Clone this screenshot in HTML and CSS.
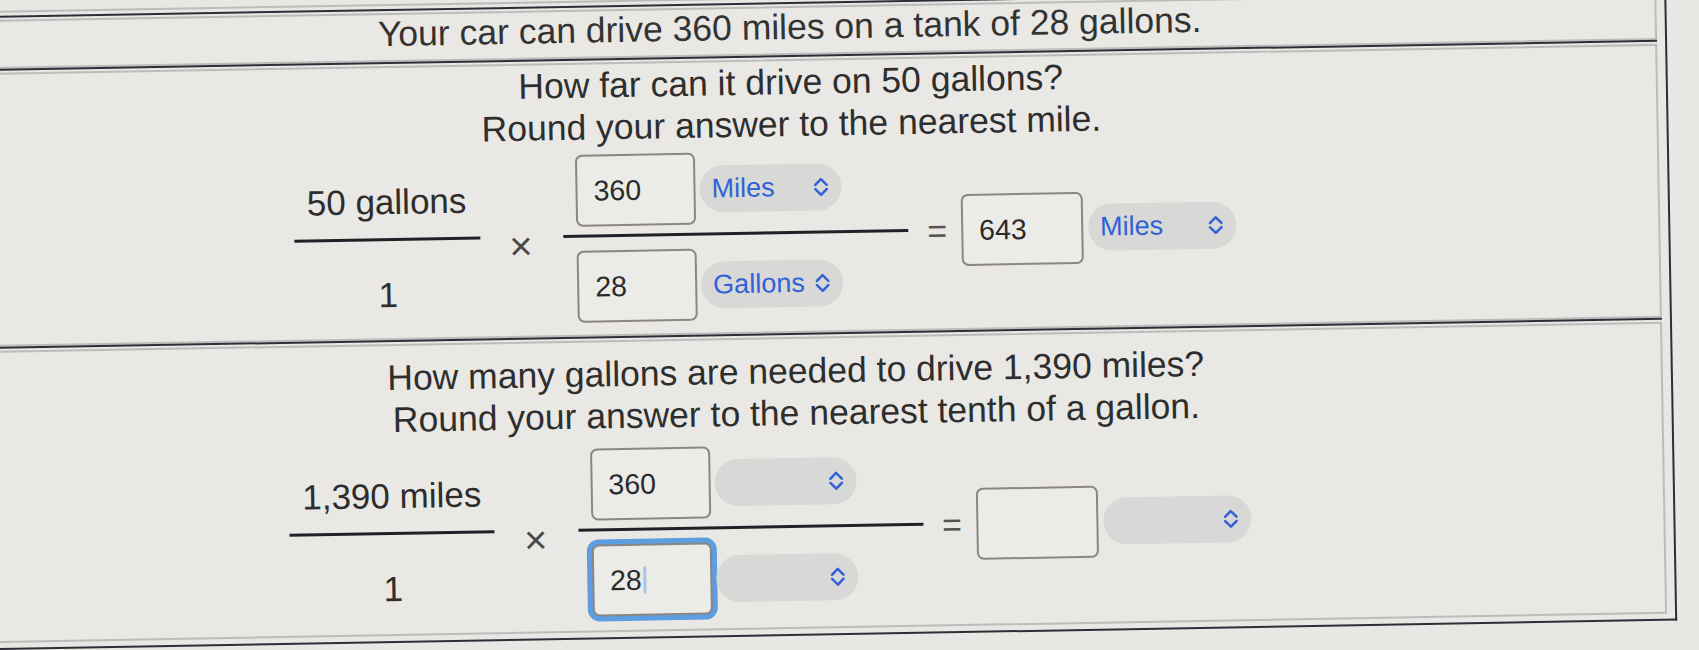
FILE: index.html
```html
<!DOCTYPE html>
<html lang="en">
<head>
<meta charset="utf-8">
<title>Unit rates</title>
<link rel="stylesheet" href="styles.css">
</head>
<body>
<div class="frame">
  <div class="stub"></div>
  <div class="rule"></div>
  <section class="section header">
    <p class="lead">Your car can drive 360 miles on a tank of 28 gallons.</p>
  </section>
  <div class="rule"></div>
  <section class="section panel panel-a">
    <p class="q">How far can it drive on 50 gallons?<br>Round your answer to the nearest mile.</p>
    <div class="eq">
      <div class="frac">
        <div class="num"><span>50 gallons</span></div>
        <div class="bar"></div>
        <div class="den"><span>1</span></div>
      </div>
      <span class="times">×</span>
      <div class="bigfrac">
        <div class="bnum">
          <div class="pair">
            <div class="box">360</div>
            <div class="sel"><span>Miles</span><svg class="chev" viewBox="0 0 16 22" width="17" height="23"><path d="M2.5 9 L8 3.5 L13.5 9 M2.5 13 L8 18.5 L13.5 13"/></svg></div>
          </div>
        </div>
        <div class="bar"></div>
        <div class="bden">
          <div class="pair">
            <div class="box">28</div>
            <div class="sel"><span>Gallons</span><svg class="chev" viewBox="0 0 16 22" width="17" height="23"><path d="M2.5 9 L8 3.5 L13.5 9 M2.5 13 L8 18.5 L13.5 13"/></svg></div>
          </div>
        </div>
      </div>
      <span class="equals">=</span>
      <div class="box ans">643</div>
      <div class="sel sel-ans"><span>Miles</span><svg class="chev" viewBox="0 0 16 22" width="17" height="23"><path d="M2.5 9 L8 3.5 L13.5 9 M2.5 13 L8 18.5 L13.5 13"/></svg></div>
    </div>
  </section>
  <div class="rule"></div>
  <section class="section panel panel-b">
    <p class="q">How many gallons are needed to drive 1,390 miles?<br>Round your answer to the nearest tenth of a gallon.</p>
    <div class="eq">
      <div class="frac">
        <div class="num"><span>1,390 miles</span></div>
        <div class="bar"></div>
        <div class="den"><span>1</span></div>
      </div>
      <span class="times">×</span>
      <div class="bigfrac">
        <div class="bnum">
          <div class="pair">
            <div class="box">360</div>
            <div class="sel"><span></span><svg class="chev" viewBox="0 0 16 22" width="17" height="23"><path d="M2.5 9 L8 3.5 L13.5 9 M2.5 13 L8 18.5 L13.5 13"/></svg></div>
          </div>
        </div>
        <div class="bar"></div>
        <div class="bden">
          <div class="pair">
            <div class="box focus">28<span class="caret"></span></div>
            <div class="sel"><span></span><svg class="chev" viewBox="0 0 16 22" width="17" height="23"><path d="M2.5 9 L8 3.5 L13.5 9 M2.5 13 L8 18.5 L13.5 13"/></svg></div>
          </div>
        </div>
      </div>
      <span class="equals">=</span>
      <div class="box ans"></div>
      <div class="sel sel-ans"><span></span><svg class="chev" viewBox="0 0 16 22" width="17" height="23"><path d="M2.5 9 L8 3.5 L13.5 9 M2.5 13 L8 18.5 L13.5 13"/></svg></div>
    </div>
  </section>
</div>
</body>
</html>
```
FILE: styles.css
```css
html, body {
  margin: 0;
  padding: 0;
  height: 100%;
  overflow: hidden;
  background: #e8e7e3;
}

body {
  font-family: "Liberation Sans", Arial, sans-serif;
  color: #2d2d2d;
}

.frame {
  display: flex;
  flex-direction: column;
  width: 1734px;
  margin-left: -72px;
  padding: 0 8px 5px 0;
  border-right: 2px solid #302c38;
  border-bottom: 2px solid #302c38;
  transform: rotate(-1deg);
  transform-origin: 922px 330px;
}

.stub {
  height: 20px;
  margin: -24px 0 3px;
  border-bottom: 2px solid #bdbcba;
  border-right: 2px solid #bdbcba;
}

.rule {
  flex: none;
  height: 2px;
  background: #302c38;
}

.section {
  border: 2px solid #bdbcba;
  background: #e9e8e4;
  margin-top: 2px;
}

.header {
  padding: 0 0 7px;
  text-align: center;
}

.lead {
  margin: 0;
  font-size: 35.5px;
  line-height: 38px;
  color: #333;
}

.panel-a {
  padding: 0 0 13px;
}

.panel-b {
  padding: 11px 0 15px;
}

.q {
  margin: 0;
  text-align: center;
  font-size: 35.5px;
  line-height: 42px;
  color: #2e2e2e;
}

.eq {
  display: flex;
  justify-content: center;
  align-items: center;
  padding-right: 56px;
}

.panel-a .eq {
  margin-top: 2px;
}

.panel-b .eq {
  margin-top: 7px;
}

.frac {
  display: flex;
  flex-direction: column;
}

.frac .num,
.frac .den {
  height: 84px;
  box-sizing: border-box;
  display: flex;
  flex-direction: column;
  align-items: center;
  padding-left: 13px;
  padding-right: 13px;
  font-size: 35px;
  line-height: 40px;
  white-space: nowrap;
}

.frac .num {
  justify-content: flex-end;
  padding-bottom: 16px;
}

.frac .den {
  justify-content: flex-start;
  padding-top: 34px;
}

.bar {
  flex: none;
  height: 3px;
  background: #222026;
}

.times {
  font-size: 40px;
  line-height: 1;
  color: #4a4a4a;
  margin: 16px 31px 0 29px;
}

.equals {
  font-size: 34px;
  line-height: 1;
  color: #555;
  margin: 0 14px 0 19px;
}

.bigfrac {
  display: flex;
  flex-direction: column;
}

.bnum,
.bden {
  height: 84px;
  box-sizing: border-box;
  display: flex;
  padding-left: 13px;
  padding-right: 66px;
}

.bnum {
  align-items: flex-end;
  padding-bottom: 8px;
}

.bden {
  align-items: flex-start;
  padding-top: 13px;
}

.pair {
  display: flex;
  align-items: center;
  gap: 4px;
}

.box {
  width: 120px;
  height: 72px;
  box-sizing: border-box;
  border: 2px solid #8b8683;
  border-radius: 7px;
  background: #ebebe8;
  padding-left: 16px;
  font-size: 28.5px;
  line-height: 68px;
  color: #2a2a2a;
}

.box.ans {
  width: 122px;
}

.box.focus {
  box-shadow: 0 0 0 5px #5d9de2;
}

.caret {
  display: inline-block;
  width: 3px;
  height: 27px;
  margin-left: 2px;
  vertical-align: -4px;
  background: #a8c6ea;
}

.sel {
  width: 142px;
  height: 47px;
  box-sizing: border-box;
  display: flex;
  align-items: center;
  justify-content: space-between;
  padding: 0 12px 0 12px;
  border-radius: 24px;
  background: #d8d8d6;
  color: #2f62d6;
  font-size: 27px;
  line-height: 47px;
}

.sel-ans {
  width: 148px;
  margin-left: 5px;
}

.chev {
  flex: none;
}

.chev path {
  fill: none;
  stroke: #3560d8;
  stroke-width: 2.4;
  stroke-linecap: round;
  stroke-linejoin: round;
}
```
